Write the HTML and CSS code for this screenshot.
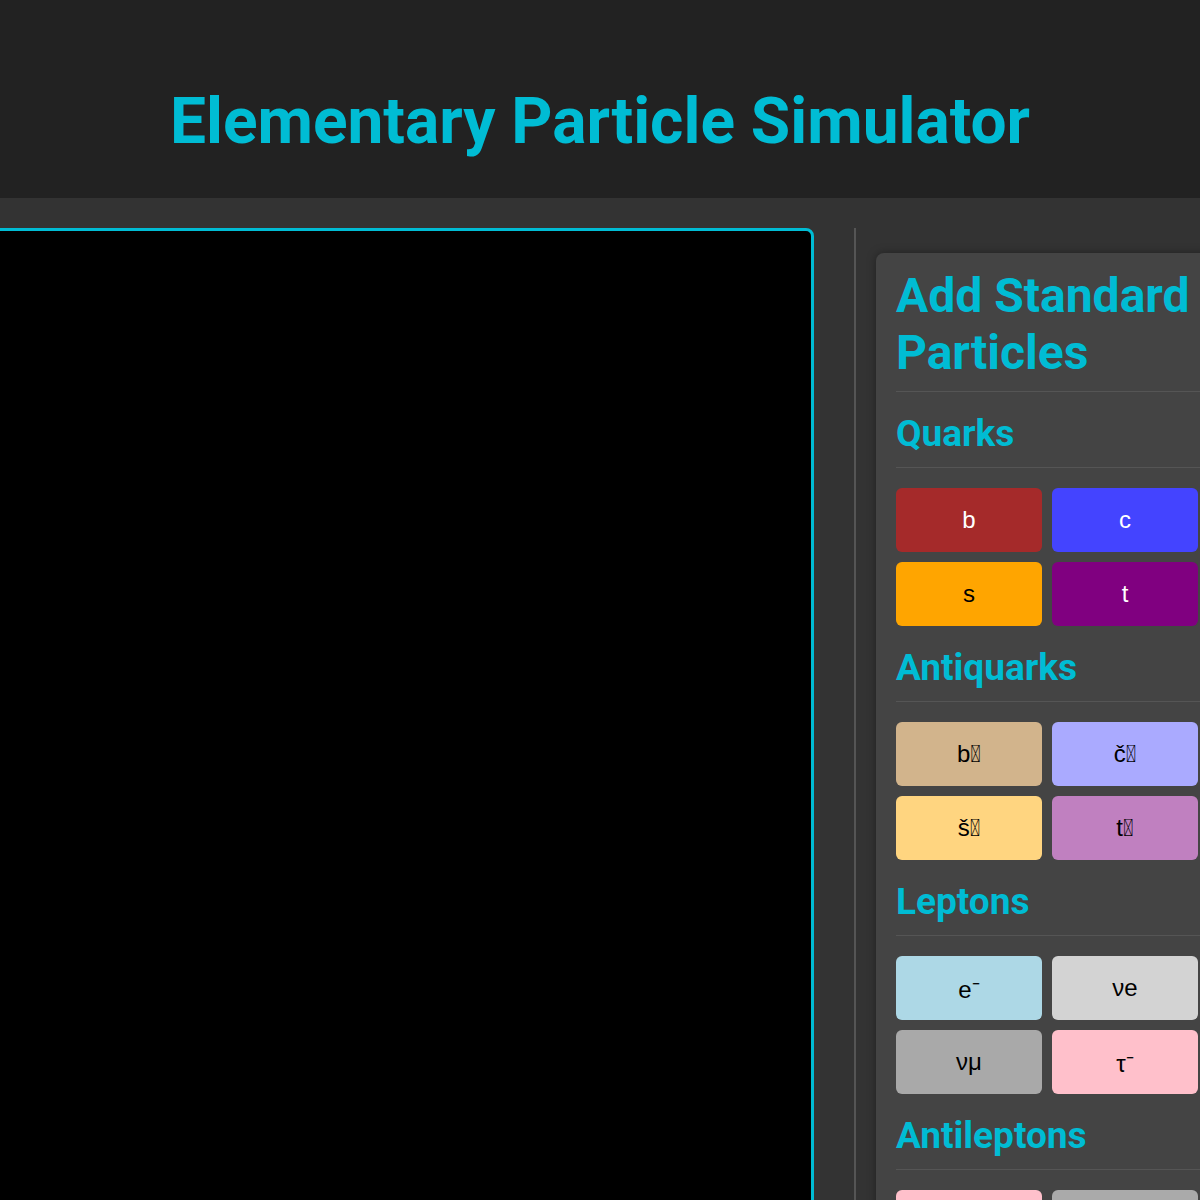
FILE: index.html
```html
<!DOCTYPE html>
<html lang="en">
<head>
<meta charset="utf-8">
<title>Elementary Particle Simulator</title>
<link rel="stylesheet" href="styles.css">
</head>
<body>
<header class="top">
  <h1 class="title">Elementary Particle Simulator</h1>
</header>
<main class="main">
  <div class="canvas"></div>
  <aside class="side">
    <section class="panel">
      <h2 class="panel-title">Add Standard Particles</h2>
      <hr class="rule">
      <h3 class="group-title">Quarks</h3>
      <hr class="rule">
      <div class="grid">
        <button class="pbtn dark" style="background:#a52a2a">b</button>
        <button class="pbtn dark" style="background:#4444ff">c</button>
        <button class="pbtn dark" style="background:#2e8b57">d</button>
        <button class="pbtn" style="background:#ffa500">s</button>
        <button class="pbtn dark" style="background:#800080">t</button>
        <button class="pbtn dark" style="background:#ff4444">u</button>
      </div>
      <h3 class="group-title">Antiquarks</h3>
      <hr class="rule">
      <div class="grid">
        <button class="pbtn" style="background:#d2b48c">b<span class="bar">&#xE000;</span></button>
        <button class="pbtn" style="background:#aaaaff">č<span class="bar">&#xE000;</span></button>
        <button class="pbtn" style="background:#90ee90">d<span class="bar">&#xE000;</span></button>
        <button class="pbtn" style="background:#ffd580">š<span class="bar">&#xE000;</span></button>
        <button class="pbtn" style="background:#c080c0">t<span class="bar">&#xE000;</span></button>
        <button class="pbtn" style="background:#ffaaaa">u<span class="bar">&#xE000;</span></button>
      </div>
      <h3 class="group-title">Leptons</h3>
      <hr class="rule">
      <div class="grid">
        <button class="pbtn" style="background:#add8e6">e⁻</button>
        <button class="pbtn" style="background:#d3d3d3">νe</button>
        <button class="pbtn" style="background:#87ceeb">μ⁻</button>
        <button class="pbtn" style="background:#a9a9a9">νμ</button>
        <button class="pbtn" style="background:#ffc0cb">τ⁻</button>
        <button class="pbtn" style="background:#c0c0c0">ντ</button>
      </div>
      <h3 class="group-title">Antileptons</h3>
      <hr class="rule">
      <div class="grid">
        <button class="pbtn" style="background:#ffc0cb">e⁺</button>
        <button class="pbtn" style="background:#aaaaaa">ν̄e</button>
        <button class="pbtn" style="background:#ffb6c1">μ⁺</button>
        <button class="pbtn" style="background:#999999">ν̄μ</button>
        <button class="pbtn" style="background:#ffc0cb">τ⁺</button>
        <button class="pbtn" style="background:#aaaaaa">ν̄τ</button>
      </div>
    </section>
  </aside>
</main>
</body>
</html>
```

FILE: styles.css
```css
html, body {
  margin: 0;
  padding: 0;
}
body {
  background: #333333;
  font-family: Roboto, "Liberation Sans", Arial, sans-serif;
  color: #ffffff;
  overflow-x: hidden;
}
.top {
  background: #222222;
  height: 198px;
  box-sizing: border-box;
  padding-top: 84px;
}
.title {
  margin: 0;
  text-align: center;
  font-family: Roboto, sans-serif;
  font-weight: 700;
  font-size: 64px;
  line-height: 75px;
  color: #00bcd4;
}
.main {
  display: flex;
  justify-content: center;
  align-items: flex-start;
  padding-top: 30px;
}
.canvas {
  flex-shrink: 0;
  box-sizing: border-box;
  width: 988px;
  height: 1000px;
  background: #000000;
  border: 3px solid #00bcd4;
  border-radius: 8px;
}
.side {
  flex-shrink: 0;
  margin-left: 40px;
  border-left: 2px solid #555555;
  padding-left: 20px;
  padding-top: 25px;
  min-height: 1000px;
}
.panel {
  box-sizing: border-box;
  width: 498px;
  background: #444444;
  border-radius: 8px;
  box-shadow: 0 0 10px rgba(0, 0, 0, 0.35);
  padding: 14px 20px 20px;
}
.panel-title {
  margin: 0 0 10px;
  font-family: Roboto, sans-serif;
  font-weight: 700;
  font-size: 48px;
  line-height: normal;
  color: #00bcd4;
}
.rule {
  border: 0;
  border-top: 1px solid #555555;
  margin: 0;
  height: 0;
}
.group-title {
  margin: 20px 0 12px;
  font-family: Roboto, sans-serif;
  font-weight: 700;
  font-size: 37px;
  line-height: normal;
  color: #00bcd4;
}
.grid {
  display: grid;
  grid-template-columns: repeat(3, 146px);
  grid-auto-rows: 64px;
  gap: 10px;
  margin-top: 20px;
}
.pbtn {
  border: 0;
  border-radius: 6px;
  font-family: "Liberation Sans", Arial, sans-serif;
  font-size: 24px;
  color: #000000;
  padding: 0;
  cursor: pointer;
}
.pbtn.dark {
  color: #ffffff;
}
.bar {
  font-family: Roboto, sans-serif;
}
```
